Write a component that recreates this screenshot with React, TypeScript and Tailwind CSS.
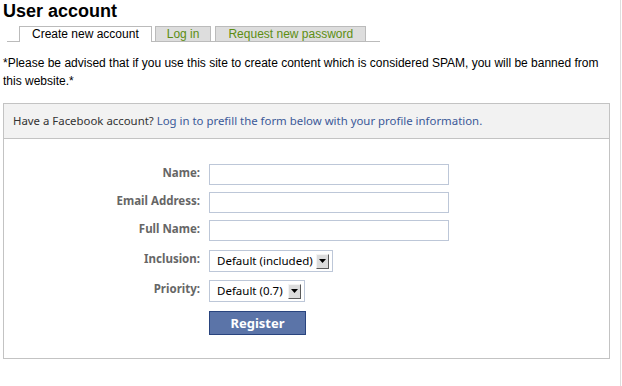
const fb = "font-['Noto_Sans','DejaVu_Sans',sans-serif]";

function Arrow() {
  return (
    <span className="ml-auto flex h-[15px] w-[13px] shrink-0 items-center justify-center border border-t-[#f4f4f4] border-l-[#f4f4f4] border-r-[#5a5a5a] border-b-[#5a5a5a] bg-[#dcdcdc]">
      <svg width="7" height="4" viewBox="0 0 7 4">
        <path d="M0 0h7L3.5 4z" fill="#000" />
      </svg>
    </span>
  );
}

function Row({ label, children, className }: { label: string; children: React.ReactNode; className?: string }) {
  return (
    <div className={`flex items-start ${className ?? ""}`}>
      <label className={`w-[196px] shrink-0 pt-[1px] text-right text-[11.5px] font-bold leading-[16px] text-[#666] ${fb}`}>
        {label}
      </label>
      <div className="ml-[9px]">{children}</div>
    </div>
  );
}

function TextInput() {
  return <input type="text" className="block h-[21px] w-[240px] border border-[#bdc7d8] bg-white outline-none" />;
}

function Select({ value, width }: { value: string; width: string }) {
  return (
    <div className={`flex h-[22px] ${width} items-center border border-[#bdc7d8] bg-white pl-[7px] pr-[3px] text-[11.5px] text-black ${fb}`}>
      <span className="whitespace-nowrap leading-[16px]">{value}</span>
      <Arrow />
    </div>
  );
}

export default function App() {
  return (
    <div className="flex h-[386px] w-[622px] bg-white font-['Liberation_Sans',Arial,sans-serif] text-black">
      <div className="w-[620px] px-[3px]">
        <h1 className="text-[18px] font-bold leading-[22px]">User account</h1>

        <ul className="ml-[4px] mt-[4px] flex w-[373px] items-end gap-[3px] border-b border-[#bbb] pl-[12px] text-[12px]">
          <li className="-mb-px h-[16px] border border-b-0 border-[#bbb] bg-white px-[12px] leading-[14px]">
            Create new account
          </li>
          <li className="h-[15px] border border-b-0 border-[#bbb] bg-[#ddd] px-[11px] leading-[14px] text-[#5c8d12]">
            Log in
          </li>
          <li className="ml-px h-[15px] border border-b-0 border-[#bbb] bg-[#ddd] px-[12px] leading-[14px] text-[#5c8d12]">
            Request new password
          </li>
        </ul>

        <p className="mt-[12px] text-[12px] leading-[18px]">
          *Please be advised that if you use this site to create content which is considered SPAM, you will be banned
          from this website.*
        </p>

        <div className="mt-[13px] w-[607px] border border-[#c3c3c3]">
          <div className={`flex h-[35px] items-center border-b border-[#c3c3c3] bg-[#f2f2f2] pl-[9px] text-[11.4px] text-[#333] ${fb}`}>
            Have a Facebook account?&nbsp;
            <a className="text-[#3b5998]">Log in to prefill the form below with your profile information.</a>
          </div>

          <div className="pb-[23px] pt-[25px]">
            <Row label="Name:" className="mb-[7px]">
              <TextInput />
            </Row>
            <Row label="Email Address:" className="mb-[7px]">
              <TextInput />
            </Row>
            <Row label="Full Name:" className="mb-[9px]">
              <TextInput />
            </Row>
            <Row label="Inclusion:" className="mb-[8px]">
              <Select value="Default (included)" width="w-[124px]" />
            </Row>
            <Row label="Priority:" className="mb-[9px]">
              <Select value="Default (0.7)" width="w-[96px]" />
            </Row>
            <div className="ml-[205px]">
              <button
                className={`block h-[24px] w-[97px] border border-[#29447e] bg-[#5b74a8] text-[13px] font-bold leading-[20px] text-white ${fb}`}
              >
                Register
              </button>
            </div>
          </div>
        </div>
      </div>
      <div className="w-px bg-[#dedede]" />
    </div>
  );
}
